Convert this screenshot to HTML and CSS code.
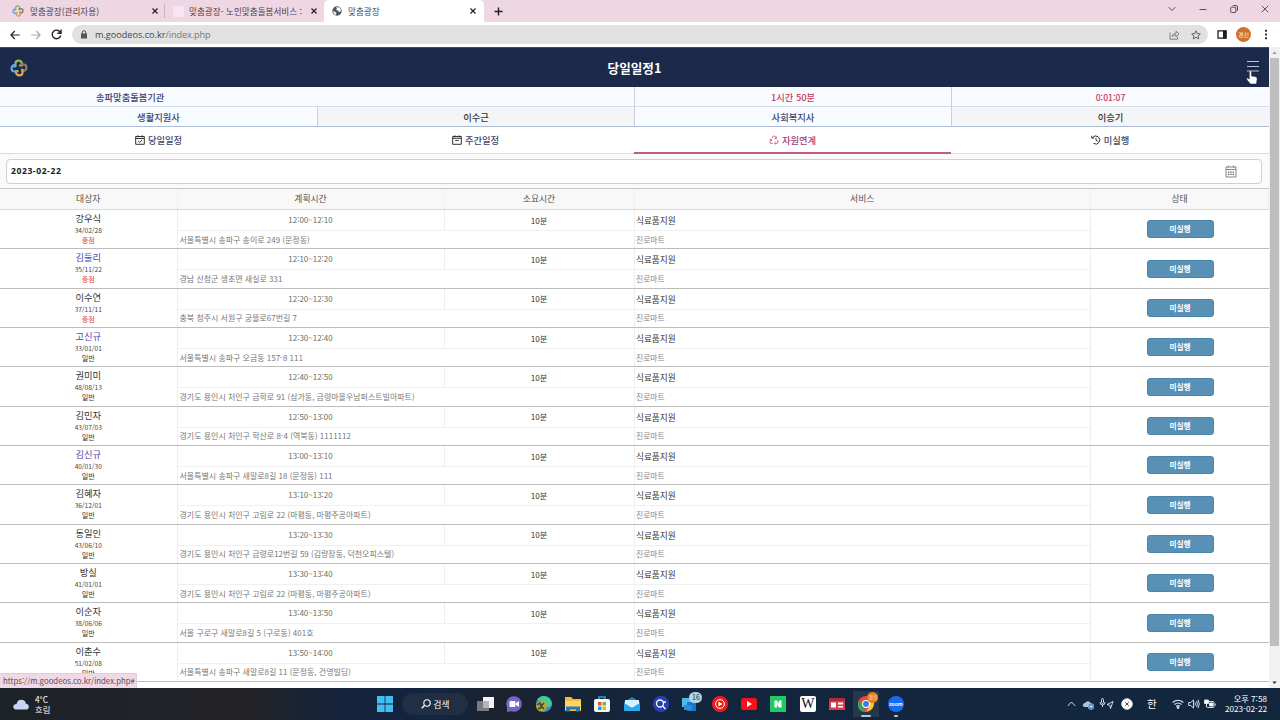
FILE: index.html
```html
<!DOCTYPE html>
<html lang="ko">
<head>
<meta charset="utf-8">
<title>맞춤광장</title>
<link rel="stylesheet" href="styles.css">
</head>
<body>
<svg class="defs" width="0" height="0">
  <symbol id="logo" viewBox="0 0 18 18"><g fill="none" stroke-width="2.2"><path d="M5.500 8V4.500Q5.500 1.600 8.500 1.600T12 4.500V6.500H9" stroke="#8fb85a"/><path d="M10.500 5.500H13.500Q16.400 5.500 16.400 8.500T13.500 12H12V9.500" stroke="#9b7568"/><path d="M12.500 10V13.500Q12.500 16.400 9.500 16.400T6 13.500V12H8.500" stroke="#dda34d"/><path d="M7.500 12.500H4.500Q1.600 12.500 1.600 9.500T4.500 6V8.500" stroke="#69abd4"/></g></symbol>
  <symbol id="close" viewBox="0 0 8 8"><path d="M1.500 1.500l5 5M6.500 1.500l-5 5" stroke="#222" stroke-width="1.2"/></symbol>
</svg>
<div class="tabstrip">
  <div class="tab tab-a"><svg class="fav" width="12" height="12"><use href="#logo"/></svg><span>맞춤광장(관리자용)</span><svg class="x" width="8" height="8"><use href="#close"/></svg></div>
  <div class="tab tab-b"><i class="blank"></i><span>맞춤광장- 노인맞춤돌봄서비스 :</span><svg class="x" width="8" height="8"><use href="#close"/></svg></div>
  <div class="tab tab-c"><svg class="fav" width="10" height="10" viewBox="0 0 10 10"><circle cx="5" cy="5" r="4.7" fill="#50555a"/><path d="M1.2 4.7l2 1.2 1.2 1-.4 2.1Q1.3 8 1.2 4.7M4 1.2l1 1.2-1 1.3 2 .8 1 1.4 1.8-.6Q9 2 6.6 1.3z" fill="#fff"/></svg><span>맞춤광장</span><svg class="x" width="8" height="8"><use href="#close"/></svg></div>
  <svg class="plus" width="9" height="9" viewBox="0 0 9 9"><path d="M4.5.5v8M.5 4.5h8" stroke="#222" stroke-width="1.4"/></svg>
  <div class="winctl">
    <svg width="8" height="8" viewBox="0 0 8 8"><path d="M.7 2.2L4 5.5l3.3-3.3"/></svg>
    <svg width="8" height="8" viewBox="0 0 8 8"><path d="M.5 4.5h7"/></svg>
    <svg width="8" height="8" viewBox="0 0 8 8"><path d="M.7 3q0-.8.8-.8H5q.8 0 .8.8v3.700q0 .8-.8.8H1.500q-.8 0-.8-.8zM2.500 1q.2-.5 1-.5H6q1.500 0 1.500 1.500v3q0 .8-.8 1"/></svg>
    <svg width="8" height="8" viewBox="0 0 8 8"><path d="M.7.7l6.600 6.600M7.300.7L.7 7.300"/></svg>
  </div>
</div>
<div class="toolbar">
  <svg width="10" height="10" viewBox="0 0 10 10"><path d="M9.700 5H.9M4.800 1L.9 5l3.900 4" stroke="#222"/></svg>
  <svg width="10" height="10" viewBox="0 0 10 10"><path d="M.3 5h8.800M5.200 1l3.900 4-3.900 4" stroke="#aaa"/></svg>
  <svg width="11" height="11" viewBox="0 0 11 11"><path d="M9.300 3.400A4.300 4.300 0 1 0 9.700 6.500M10 .6v3.700H6.300" stroke="#222" stroke-width="1.400"/></svg>
  <div class="omnibox">
    <svg width="8" height="9" viewBox="0 0 8 9"><path d="M1 3.500h6V8.500H1z" fill="#555" stroke="none"/><path d="M2.300 4V2.200q0-1.500 1.700-1.500t1.700 1.500V4" stroke="#555" stroke-width="1"/></svg>
    <span class="url">m.goodeos.co.kr<em>/index.php</em></span>
    <svg class="share" width="11" height="10" viewBox="0 0 11 10"><path d="M1 2.500v6.700h7.500V7M3 6.500Q3.500 3.500 7 3.500V1.200L10.200 4 7 6.800V5Q4.500 5 3 6.500z" stroke="#777" stroke-width=".9"/></svg>
    <svg class="star" width="10" height="10" viewBox="0 0 10 10"><path d="M5 .8l1.250 2.800 3.100.3-2.350 2 .7 3L5 7.300 2.300 8.900l.7-3L.650 3.900l3.100-.3z" stroke="#555" stroke-width=".9"/></svg>
  </div>
  <svg width="10" height="9" viewBox="0 0 10 9"><path d="M1 .8h8v7.400H1z" stroke="#1d1d1d" stroke-width="1.300"/><path d="M6 .5h3.500v8H6z" fill="#1d1d1d" stroke="none"/></svg>
  <b class="avatar">경신</b>
  <svg class="dots" width="4" height="11" viewBox="0 0 4 11"><path d="M1 .8h2v2H1zM1 4.500h2v2H1zM1 8.200h2v2H1z" fill="#333" stroke="none"/></svg>
</div>

<div class="viewport">
<main class="page">
  <header class="appbar">
    <svg width="18" height="18"><use href="#logo"/></svg>
    <h1>당일일정1</h1>
    <svg class="menu" width="12" height="12" viewBox="0 0 12 12"><path d="M0 1.500h12M0 6.500h12M0 11h12" stroke="#b9c4dc" stroke-width="1"/></svg>
    <svg class="hand" width="12" height="15" viewBox="0 0 11 14"><path d="M3 1.500Q3 .5 4 .5t1 1v4l4 .8Q10.500 6.700 10.300 8.500L9.600 13H4L1 9.300Q-.2 7.700 1.200 7.400L3 8.500z" fill="#fff" stroke="#26314b" stroke-width=".5"/></svg>
  </header>
  <section class="info">
    <div class="org">송파맞춤돌봄기관</div><div class="red">1시간 50분</div><div class="red num">0:01:07</div>
    <div>생활지원사</div><div class="val">이수근</div><div>사회복지사</div><div class="val">이승기</div>
  </section>
  <nav class="nav">
    <a><svg width="10" height="10" viewBox="0 0 10 10"><path d="M.7 1.500h8.600v7.800H.7zM.7 3.500h8.600M2.800.3v2M7.200.3v2M3.200 6l1.400 1.300L7 5" stroke="#333"/></svg>당일일정</a>
    <a><svg width="10" height="10" viewBox="0 0 10 10"><path d="M.7 1.500h8.600v7.800H.7zM.7 3.300h8.600M2.800.3v2M7.200.3v2M3.200 5.500h3.600" stroke="#333"/></svg>주간일정</a>
    <a class="on"><svg width="10" height="10" viewBox="0 0 10 10"><path d="M3 3.300L4.400 1h1.500L7.200 3.200M7.400 1.500v1.900H5.500M8.200 4.800l1.100 2-.8 1.500H5.700M6.700 7.200L5.500 8.300l1.200 1.100M4 8.300H1.500l-.8-1.500L2.200 4.500M.7 4.800l1.600-.4.600 1.600" stroke="#c8467c" stroke-width=".8"/></svg>자원연계</a>
    <a><svg width="10" height="10" viewBox="0 0 10 10"><path d="M1.500 2.700A4 4 0 1 1 2.500 8.300M.8.8v2.300h2.400M5 2.800v2.500l1.800 1" stroke="#333"/></svg>미실행</a>
  </nav>
  <div class="datebar"><div class="date"><span>2023-02-22</span><svg width="12" height="13" viewBox="0 0 12 13"><path d="M1 2h10v10H1zM1 4.500h10M3.300.5v2M8.700.5v2" stroke="#777" stroke-width=".9"/><path d="M3 7.200h6M3 9.400h6" stroke="#666" stroke-width="1.300" stroke-dasharray="1.400 .9"/></svg></div></div>
  <div class="thead"><div>대상자</div><div>계획시간</div><div>소요시간</div><div>서비스</div><div>상태</div></div>
  <div class="row"><div class="who"><b>강우식</b><i>34/02/28</i><s class="hot">중점</s></div><div class="time">12:00~12:10</div><div class="dur">10분</div><div class="svc">식료품지원</div><div class="addr">서울특별시 송파구 송이로 249 (문정동)</div><div class="shop">진로마트</div><div class="state"><button>미실행</button></div></div>
  <div class="row"><div class="who"><b class="blue">김둘리</b><i>35/11/22</i><s class="hot">중점</s></div><div class="time">12:10~12:20</div><div class="dur">10분</div><div class="svc">식료품지원</div><div class="addr">경남 산청군 생초면 새실로 331</div><div class="shop">진로마트</div><div class="state"><button>미실행</button></div></div>
  <div class="row"><div class="who"><b>이수연</b><i>37/11/11</i><s class="hot">중점</s></div><div class="time">12:20~12:30</div><div class="dur">10분</div><div class="svc">식료품지원</div><div class="addr">충북 청주시 서원구 궁뜰로67번길 7</div><div class="shop">진로마트</div><div class="state"><button>미실행</button></div></div>
  <div class="row"><div class="who"><b class="blue">고신규</b><i>33/01/01</i><s>일반</s></div><div class="time">12:30~12:40</div><div class="dur">10분</div><div class="svc">식료품지원</div><div class="addr">서울특별시 송파구 오금동 157-8 111</div><div class="shop">진로마트</div><div class="state"><button>미실행</button></div></div>
  <div class="row"><div class="who"><b>권미미</b><i>48/08/13</i><s>일반</s></div><div class="time">12:40~12:50</div><div class="dur">10분</div><div class="svc">식료품지원</div><div class="addr">경기도 용인시 처인구 금학로 91 (삼가동, 금령마을우남퍼스트빌아파트)</div><div class="shop">진로마트</div><div class="state"><button>미실행</button></div></div>
  <div class="row"><div class="who"><b>김민자</b><i>43/07/03</i><s>일반</s></div><div class="time">12:50~13:00</div><div class="dur">10분</div><div class="svc">식료품지원</div><div class="addr">경기도 용인시 처인구 학산로 8-4 (역북동) 1111112</div><div class="shop">진로마트</div><div class="state"><button>미실행</button></div></div>
  <div class="row"><div class="who"><b class="blue">김신규</b><i>40/01/30</i><s>일반</s></div><div class="time">13:00~13:10</div><div class="dur">10분</div><div class="svc">식료품지원</div><div class="addr">서울특별시 송파구 새말로8길 18 (문정동) 111</div><div class="shop">진로마트</div><div class="state"><button>미실행</button></div></div>
  <div class="row"><div class="who"><b>김혜자</b><i>36/12/01</i><s>일반</s></div><div class="time">13:10~13:20</div><div class="dur">10분</div><div class="svc">식료품지원</div><div class="addr">경기도 용인시 처인구 고림로 22 (마평동, 마평주공아파트)</div><div class="shop">진로마트</div><div class="state"><button>미실행</button></div></div>
  <div class="row"><div class="who"><b>동일인</b><i>43/06/10</i><s>일반</s></div><div class="time">13:20~13:30</div><div class="dur">10분</div><div class="svc">식료품지원</div><div class="addr">경기도 용인시 처인구 금령로12번길 59 (김량장동, 덕천오피스텔)</div><div class="shop">진로마트</div><div class="state"><button>미실행</button></div></div>
  <div class="row"><div class="who"><b>방실</b><i>41/01/01</i><s>일반</s></div><div class="time">13:30~13:40</div><div class="dur">10분</div><div class="svc">식료품지원</div><div class="addr">경기도 용인시 처인구 고림로 22 (마평동, 마평주공아파트)</div><div class="shop">진로마트</div><div class="state"><button>미실행</button></div></div>
  <div class="row"><div class="who"><b>이순자</b><i>38/06/06</i><s>일반</s></div><div class="time">13:40~13:50</div><div class="dur">10분</div><div class="svc">식료품지원</div><div class="addr">서울 구로구 새말로8길 5 (구로동) 401호</div><div class="shop">진로마트</div><div class="state"><button>미실행</button></div></div>
  <div class="row"><div class="who"><b>이춘수</b><i>51/02/08</i><s>일반</s></div><div class="time">13:50~14:00</div><div class="dur">10분</div><div class="svc">식료품지원</div><div class="addr">서울특별시 송파구 새말로8길 11 (문정동, 건영빌딩)</div><div class="shop">진로마트</div><div class="state"><button>미실행</button></div></div>
</main>
<aside class="scroll"><svg width="11" height="11" viewBox="0 0 11 11"><path d="M3.300 7h4.400L5.500 4.600z" fill="#999"/></svg><i></i><svg width="11" height="11" viewBox="0 0 11 11"><path d="M3.300 4.500h4.400L5.500 7z" fill="#333"/></svg></aside>
<div class="status">https://m.goodeos.co.kr/index.php#</div>
</div>

<footer class="taskbar">
  <svg class="cloud" width="16" height="11" viewBox="0 0 16 11"><path d="M3.500 10.500Q.3 10.500.3 7.700.5 5.200 3.500 5 4.500.7 8.300.7q4 0 4.600 4 2.900.3 2.900 3 0 2.800-3 2.800z" fill="#c6d6f7"/></svg>
  <div class="temp">4°C<br>흐림</div>
  <svg class="start" width="16" height="16" viewBox="0 0 16 16"><path d="M0 0h7.600v7.600H0zM8.400 0H16v7.600H8.400zM0 8.400h7.600V16H0zM8.400 8.400H16V16H8.400z" fill="#45bdf0"/></svg>
  <div class="search"><svg width="10" height="10" viewBox="0 0 10 10"><circle cx="6" cy="4" r="3.200" fill="none" stroke="#fff" stroke-width="1.100"/><path d="M3.700 6.300L.7 9.300" stroke="#fff" stroke-width="1.300"/></svg>검색</div>
  <div class="apps">
    <svg viewBox="0 0 20 20"><path d="M8 3h11v11H8z" fill="#f2f3f4"/><path d="M2 7h12v10H2z" fill="#777b80"/><path d="M8 7h6v7H8z" fill="#b4b7ba"/></svg>
    <svg viewBox="0 0 20 20"><circle cx="10" cy="10" r="7.800" fill="#7467c8"/><path d="M3 13v5l5-1z" fill="#7467c8"/><rect x="5.500" y="7" width="6" height="6" rx="1" fill="#fff"/><path d="M12 9l3-2v6l-3-2z" fill="#fff"/></svg>
    <svg viewBox="0 0 20 20"><circle cx="10" cy="10" r="8" fill="#2694cd"/><path d="M3 6Q8-1 15 4q4 4 2 8-3 2-7 0 2-5-7-6" fill="#46c99b"/><circle cx="7.500" cy="12" r="5.500" fill="#b5a53b"/><path d="M3 11l3-2 1 3 3-3M4 15l4-2 2 2" fill="none" stroke="#36502a" stroke-width="1.500"/></svg>
    <svg viewBox="0 0 20 20"><path d="M2 3h6l2 2h8v12H2z" fill="#f6b93b"/><path d="M2 7h16v9H2z" fill="#ffd565"/><path d="M3 12.500h14v5h-4v-2H7v2H3z" fill="#207dbb"/></svg>
    <svg viewBox="0 0 20 20"><path d="M7 6V3h6v3" fill="none" stroke="#2e9ad8" stroke-width="1.500"/><rect x="2" y="5" width="16" height="13" rx="2" fill="#f7f7f7"/><path d="M6 8h3.500v3.500H6z" fill="#e8532a"/><path d="M10.500 8H14v3.500h-3.500z" fill="#76b82a"/><path d="M6 12.500h3.500V16H6z" fill="#1d9ce0"/><path d="M10.500 12.500H14V16h-3.500z" fill="#f7b718"/></svg>
    <svg viewBox="0 0 20 20"><path d="M2 8l8-5 8 5v9H2z" fill="#1683cf"/><path d="M3 6h14v4l-7 4-7-4z" fill="#d7f1ff"/><path d="M2 9l8 5 8-5v8H2z" fill="#2ea8e8"/></svg>
    <svg viewBox="0 0 20 20"><circle cx="10" cy="10" r="8.200" fill="#293fb0"/><circle cx="9" cy="9.500" r="3.500" fill="none" stroke="#fff" stroke-width="1.300"/><path d="M11.500 12l3 3M12 8h3" stroke="#fff" stroke-width="1.300"/></svg>
    <div class="app"><svg viewBox="0 0 20 20"><path d="M2 4h9v9H2z" fill="#50b9ec"/><path d="M7 8h9v9H7z" fill="#1678c7"/><path d="M4 11h8v5H4z" fill="#268fd8"/></svg><b class="badge">16</b></div>
    <svg viewBox="0 0 20 20"><circle cx="10" cy="10" r="8" fill="#f11d1d"/><circle cx="10" cy="10" r="4.400" fill="none" stroke="#fff"/><path d="M8.500 7.500l4 2.500-4 2.500z" fill="#fff"/></svg>
    <svg viewBox="0 0 20 20"><rect x="2" y="4" width="16" height="12" rx="2.500" fill="#f5101c"/><path d="M8 7l5 3-5 3z" fill="#fff"/></svg>
    <svg viewBox="0 0 20 20"><path d="M2 2h16v16H2z" fill="#20c965"/><path d="M6.500 6.500H9l2 3v-3h2.500v7H11l-2-3v3H6.500z" fill="#fff"/></svg>
    <div class="app wiki">W</div>
    <svg viewBox="0 0 20 20"><path d="M2 4h16v12H2z" fill="#d83c4d"/><path d="M2 4h16v3H2z" fill="#ae2b3d"/><path d="M4 8.500h5v5H4zM11 8.500h5v2h-5zM11 12h5v1.500h-5z" fill="#fff"/></svg>
    <div class="app active"><svg viewBox="0 0 20 20"><circle cx="10" cy="10" r="8" fill="#e8473d"/><path d="M3 6l5 9 2 3Q1 18 2 9z" fill="#30a853"/><path d="M10 6h7.500Q20 15 10 18l4-7z" fill="#fbc82e"/><circle cx="10" cy="10" r="4" fill="#fff"/><circle cx="10" cy="10" r="3" fill="#367ee8"/></svg><b class="mini">경신</b></div>
    <div class="app zoomer"><b>zoom</b></div>
  </div>
  <div class="tray">
    <svg width="9" height="8" viewBox="0 0 9 8"><path d="M.7 6l3.800-4 3.800 4"/></svg>
    <svg width="12" height="11" viewBox="0 0 12 11"><path d="M2 8Q0 7 1 5q1-1 2-1Q5 1 8 3l1 2q2 1 1 3z" fill="#a8c4dd" stroke="none"/><circle cx="9" cy="7.500" r="3" fill="#3e83c2" stroke="#ddd" stroke-width=".5"/><path d="M7.500 7.500h3M9 6v3"/></svg>
    <svg width="15" height="12" viewBox="0 0 15 12"><path d="M2.500 1.500q0-1 1-1t1 1v3q0 1-1 1t-1-1zM1 4q0 3 2.500 3T6 4M3.500 7v2M14 3.500l-6 3 3 1 .5 3z"/></svg>
    <svg width="12" height="12" viewBox="0 0 12 12"><circle cx="6" cy="6" r="5.300" fill="#fff"/><path d="M4.200 4.200l3.600 3.600M7.800 4.200L4.200 7.800" stroke="#333"/></svg>
    <span class="ime">한</span>
    <svg width="12" height="10" viewBox="0 0 12 10"><path d="M.7 3.500Q6-1 11.300 3.500M2.500 5.500Q6 2.500 9.500 5.500M4.300 7.300Q6 6 7.700 7.300" stroke-width="1.200"/><circle cx="6" cy="8.600" r=".9" fill="#fff"/></svg>
    <svg width="12" height="10" viewBox="0 0 12 10"><path d="M.7 3.500h2L5.500 1v8L2.700 6.500h-2zM7 3.500q1 1.500 0 3M8.500 2q2 3 0 6M10 .7q2.700 4.300 0 8.600"/></svg>
    <svg width="12" height="10" viewBox="0 0 12 10"><rect x="2.500" y="2.500" width="7.500" height="6" rx="1"/><path d="M5.500 4H9v3H5.500zM.5 1h4v3.500h-4z" fill="#fff"/><path d="M11.300 4.500v2M2.500 5v3"/></svg>
    <div class="clock">오후 7:58<br>2023-02-22</div>
  </div>
</footer>
</body>
</html>
```
FILE: styles.css
```css
* { box-sizing: border-box; }
body { margin: 0; width: 1280px; height: 720px; overflow: hidden; display: flex; flex-direction: column; background: #fff; font-family: "Noto Sans CJK KR", sans-serif; font-size: 9.3px; line-height: 12px; white-space: nowrap; color: #333; }
svg { display: block; flex: none; }
.defs { position: absolute; }

.tabstrip { height: 22px; flex: none; display: flex; background: #efd6e3; font-size: 8.6px; color: #4c4148; }
.tab { display: flex; align-items: center; height: 22px; }
.tab span { flex: 1; overflow: hidden; }
.tab-a { width: 165px; padding: 0 5px 0 12px; border-right: 1px solid #c9b3be; height: 14px; margin-top: 4px; }
.tab-a .fav { margin-right: 6px; }
.tab-b { width: 159px; padding: 0 6px 0 8px; }
.tab-b span { font-size: 8.6px; }
.blank { width: 11px; height: 11px; margin-right: 5px; background: #fbe4f1; }
.tab-c { width: 160px; padding: 0 7px 0 8px; background: #fff; border-radius: 5px 5px 0 0; }
.tab-c .fav { margin-right: 6px; }
.plus { margin: 7px 0 0 10px; }
.winctl { margin-left: auto; display: flex; gap: 23px; padding: 5px 11px 0 0; }
.winctl svg { fill: none; stroke: #4c4148; stroke-width: .9; }

.toolbar { height: 25px; flex: none; display: flex; align-items: center; padding: 0 12px 0 10px; background: #fff; }
.toolbar svg { fill: none; stroke-width: 1.2; }
.toolbar > svg:nth-child(2) { margin-left: 11px; }
.toolbar > svg:nth-child(3) { margin-left: 10px; }
.omnibox { width: 1136px; height: 19px; margin: 0 9px 0 10px; padding: 0 7px 0 8px; border-radius: 10px; background: #e1e1e1; display: flex; align-items: center; }
.url { margin-left: 7px; font-family: "Open Sans", "Noto Sans", sans-serif; font-size: 9.15px; color: #444; }
.url em { font-style: normal; color: #777; letter-spacing: -.1px; }
.share { margin-left: auto; }
.star { margin-left: 11px; }
.avatar { width: 15px; height: 15px; margin-left: 9px; border-radius: 50%; background: #d2712e; color: #ffe6d2; font-size: 6px; line-height: 15px; text-align: center; font-weight: 400; }
.dots { margin-left: auto; }

.viewport { position: relative; height: 641px; flex: none; display: flex; overflow: hidden; }
.page { width: 1269px; }
.appbar { position: relative; height: 40px; display: flex; align-items: center; padding: 0 10px 0 10px; background: #1b2a4b; border-top: 1px solid #3c4964; }
.appbar h1 { flex: 1; margin: 0 0 0 -6px; text-align: center; color: #fff; font-size: 12.6px; font-weight: 700; line-height: 16px; }
.menu { margin-bottom: 3px; }
.hand { position: absolute; left: 1246px; top: 22px; }
.info { height: 40px; display: grid; grid-template-columns: 317px 317px 317px 318px; grid-template-rows: 20px 20px; }
.info div { display: flex; align-items: center; justify-content: center; border-left: 1px solid #c8d0dc; border-bottom: 1px solid #d5dce5; background: #f8fbff; color: #3b4468; font-weight: 500; font-size: 9.3px; }
.info div:nth-child(1), .info div:nth-child(4) { border-left: 0; }
.info div:nth-child(n+4) { border-bottom: 1px solid #aebdd4; }
.info .org { grid-column: span 2; justify-content: flex-start; padding-left: 96px; }
.info .red { color: #c73d5c; }
.info .num { font-size: 8.6px; padding-top: 1px; }
.info .val { background: #f4f5f7; color: #333; }

.nav { height: 27px; display: grid; grid-template-columns: 317px 317px 317px 318px; }
.nav a { display: flex; align-items: center; justify-content: center; gap: 3px; padding-bottom: 1px; border-bottom: 1px solid #dcdcdc; color: #3b4468; font-weight: 500; font-size: 9.3px; }
.nav svg { fill: none; }
.nav .on { color: #9f3e7b; padding-bottom: 0; border-bottom: 2px solid #c25d80; }
.datebar { height: 33.5px; padding: 4.5px 7px 4px 6px; background: #fafafa; }
.date { height: 25px; border: 1px solid #cfcfcf; border-radius: 4px; background: #fff; display: flex; align-items: center; justify-content: space-between; padding: 0 24px 0 4px; }
.date span { font-family: "Open Sans", sans-serif; font-weight: 700; font-size: 8.6px; letter-spacing: .55px; color: #222; }
.date svg { fill: none; }

.thead, .row { display: grid; grid-template-columns: 177.5px 267px 190px 456.5px 178px; }
.thead { height: 22.6px; border-top: 1px solid #c6c6c6; border-bottom: 1px solid #d9d9d9; background: #f8f8f8; font-size: 8.8px; color: #4c5257; }
.thead div { display: flex; align-items: center; justify-content: center; border-right: 1px solid #f1f1f1; }
.row { height: 39.33px; grid-template-rows: 21px 17.33px; border-bottom: 1px solid #bcbcbc; font-size: 8.6px; }
.row > div { display: flex; align-items: center; border-right: 1px solid #eee; }
.row .who { grid-row: 1 / 3; flex-direction: column; justify-content: flex-start; padding-top: 2px; }
.who b { font-size: 9.3px; font-weight: 400; line-height: 13px; color: #333; }
.who .blue { color: #5146b0; }
.who i { font-style: normal; font-size: 6.6px; line-height: 11px; color: #444; }
.who s { text-decoration: none; font-size: 7.1px; line-height: 9px; color: #333; }
.who .hot { color: #dc4b41; }
.row .time { justify-content: center; font-size: 8px; color: #667062; border-bottom: 1px solid #f0f0f0; }
.row .dur { justify-content: center; border-bottom: 1px solid #f0f0f0; font-size: 8.2px; padding-bottom: 1px; }
.row .svc { padding-left: 1.5px; border-bottom: 1px solid #f0f0f0; }
.row .addr { grid-area: 2 / 2 / 3 / 4; padding-left: 2px; font-size: 7.97px; color: #777; }
.row .shop { grid-area: 2 / 4 / 3 / 5; padding-left: 1.5px; font-size: 7.8px; color: #858585; }
.row .state { grid-area: 1 / 5 / 3 / 6; justify-content: center; border-right: 0; }
.state button { width: 67px; height: 18px; margin: 0; padding: 0 0 1px; border: 1px solid #4a86aa; border-radius: 3px; background: #5891b5; color: #fff; font: 700 7.7px/15px "Noto Sans CJK KR", sans-serif; }

.scroll { width: 11px; display: flex; flex-direction: column; background: #f1f1f1; }
.scroll i { width: 9px; height: 588px; margin: 0 auto; background: #bebebe; }
.scroll svg:last-child { margin-top: auto; }
.status { position: absolute; left: 0; bottom: 0; width: 137px; height: 15px; padding-left: 3px; background: #f0d8e4; border-top: 1px solid #e5cad8; border-right: 1px solid #e5cad8; font: 7.8px/13px "Noto Sans CJK KR", sans-serif; color: #5a4a54; }

.taskbar { height: 32px; flex: none; display: flex; align-items: center; color: #fff; background: linear-gradient(90deg, #1d2228 0, #232327 250px, #14233c 340px, #13243f 440px, #1b222d 500px, #14253c 620px, #12273e 100%); }
.cloud { margin-left: 13px; }
.temp { width: 348px; padding-left: 6px; font-size: 8.3px; line-height: 10px; }
.start { margin-left: 0; }
.search { width: 66px; height: 22px; margin-left: 9px; border-radius: 11px; background: #202f44; display: flex; align-items: center; justify-content: center; gap: 3px; font-size: 8.6px; }
.apps { display: flex; margin-left: 7px; gap: 9.35px; align-items: center; }
.apps svg, .app { width: 20px; height: 20px; flex: none; position: relative; }
.badge { position: absolute; left: 9px; top: -2px; width: 13px; height: 11px; border-radius: 6px; background: #b1d5e4; color: #203746; font-size: 7px; line-height: 11px; text-align: center; font-weight: 400; }
.apps .wiki { width: 16px; height: 16px; margin: 0 2px; border-radius: 2px; background: #fff; color: #111; font: 14px/16px "Liberation Serif", serif; text-align: center; }
.active { background: #26364b; box-shadow: 0 0 0 3px #26364b; }
.active::after, .zoomer::after { content: ""; position: absolute; left: 5px; bottom: -3px; width: 10px; height: 2px; border-radius: 1px; background: #b9c8d4; }
.mini { position: absolute; right: -2px; top: -2px; width: 11px; height: 11px; border-radius: 50%; background: #e87e2d; color: #ffe6d2; font-size: 4.5px; line-height: 11px; text-align: center; font-weight: 400; }
.zoomer b { display: block; width: 16px; height: 16px; margin: 2px; border-radius: 50%; background: #176bf2; color: #fff; font-size: 5px; line-height: 15px; text-align: center; }
.zoomer::after { left: 8px; width: 4px; }
.tray { margin-left: auto; padding-right: 13px; display: flex; align-items: center; }
.tray svg { fill: none; stroke: #e6edf3; stroke-width: .9; }
.tray svg:nth-child(2) { margin-left: 6px; }
.tray svg:nth-child(3) { margin-left: 5px; }
.tray svg:nth-child(4) { margin-left: 7px; }
.ime { width: 11px; margin: 0 14px 0 14px; font-size: 10.5px; }
.tray svg:nth-child(n+7) { margin-left: 4px; }
.clock { width: 50px; margin-left: 1px; text-align: right; font-size: 8.2px; line-height: 10px; padding-bottom: 2px; }
```
